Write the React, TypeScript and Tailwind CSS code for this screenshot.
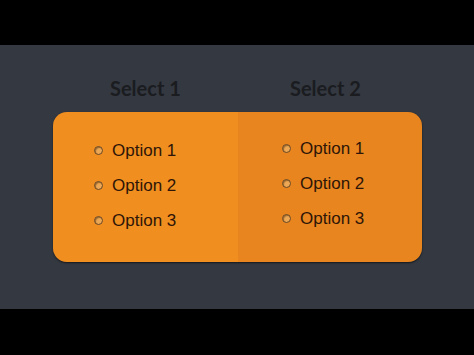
export default function App() {
  const options = ["Option 1", "Option 2", "Option 3"];

  function Radio() {
    return (
      <span className="inline-block h-[9px] w-[9px] rounded-full border-[1.5px] border-[#6a4622] bg-[#eca855] shadow-[inset_1px_1px_1px_rgba(60,30,0,0.45)]" />
    );
  }

  function Column({ pl, pt, bg }: { pl: string; pt: string; bg: string }) {
    return (
      <div className={`flex flex-col gap-[14px] ${pl} ${pt} ${bg}`}>
        {options.map((o) => (
          <label key={o} className="flex items-center gap-[9px] text-[17px] leading-[21px] text-[#2e1507]">
            <Radio />
            <span>{o}</span>
          </label>
        ))}
      </div>
    );
  }

  return (
    <div className="flex h-[355px] w-[474px] flex-col bg-black font-['Liberation_Sans',Arial,sans-serif]">
      <div className="h-[45px] bg-black" />
      <div className="h-[264px] bg-[#343840] pl-[53px] pt-[31px]">
        <div className="grid w-[369px] grid-cols-[185px_184px] font-['Lato',sans-serif] text-[20px] font-bold leading-[24px] text-[#1a1c20]">
          <div className="pl-[57px]">Select 1</div>
          <div className="pl-[52px]">Select 2</div>
        </div>
        <div className="mt-[12px] grid h-[150px] w-[369px] grid-cols-[185px_184px] overflow-hidden rounded-[14px] shadow-[0_1px_2px_rgba(0,0,0,0.6)]">
          <Column pl="pl-[41px]" pt="pt-[28px]" bg="bg-[#f08e20]" />
          <Column pl="pl-[44px]" pt="pt-[26px]" bg="bg-[#e8851f]" />
        </div>
      </div>
      <div className="flex-1 bg-black" />
    </div>
  );
}
